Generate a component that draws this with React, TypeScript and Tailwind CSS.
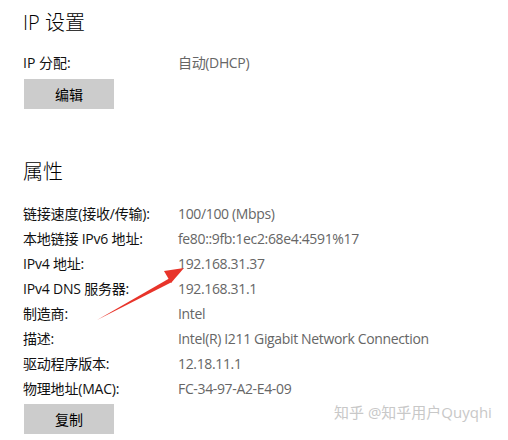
import React from 'react';

const rows: [string, string][] = [
  ['链接速度(接收/传输):', '100/100 (Mbps)'],
  ['本地链接 IPv6 地址:', 'fe80::9fb:1ec2:68e4:4591%17'],
  ['IPv4 地址:', '192.168.31.37'],
  ['IPv4 DNS 服务器:', '192.168.31.1'],
  ['制造商:', 'Intel'],
  ['描述:', 'Intel(R) I211 Gigabit Network Connection'],
  ['驱动程序版本:', '12.18.11.1'],
  ['物理地址(MAC):', 'FC-34-97-A2-E4-09'],
];

const font = { fontFamily: '"Open Sans", "Noto Sans CJK SC", sans-serif' };

export default function App() {
  return (
    <div className="relative w-[508px] h-[440px] bg-white overflow-hidden pl-[23px] text-[14px] text-[#111]" style={font}>
      <h1 className="pt-[10px] text-[20px] leading-[26px] font-light text-black">IP 设置</h1>
      <div className="mt-[18px] flex leading-[18px]">
        <span className="w-[155px]">IP 分配:</span>
        <span className="text-[#666] tracking-[-0.35px]">自动(DHCP)</span>
      </div>
      <button className="mt-[7px] ml-px w-[90px] h-[30px] bg-[#cccccc] text-[14px] text-black">编辑</button>

      <h2 className="mt-[50px] text-[20px] leading-[26px] font-light text-black">属性</h2>
      <div className="mt-[16px] flex flex-col">
        {rows.map(([k, v]) => (
          <div key={k} className="flex h-[25px] items-center">
            <span className="w-[155px] shrink-0 tracking-[-0.2px]">{k}</span>
            <span className="text-[#666] tracking-[-0.35px]">{v}</span>
          </div>
        ))}
      </div>
      <button className="mt-[3px] ml-px w-[90px] h-[30px] bg-[#cccccc] text-[14px] text-black">复制</button>

      <div className="absolute left-[334px] top-[401px] text-[15px] text-[#c8c8c8]">知乎 @知乎用户Quyqhi</div>

      <svg className="absolute left-0 top-0" width="508" height="440">
        <path d="M97 320 L170 278 L172 282 Z" fill="#e8342a" />
        <path d="M184 268 L164 271 L171 283 Z" fill="#e8342a" />
      </svg>
    </div>
  );
}
